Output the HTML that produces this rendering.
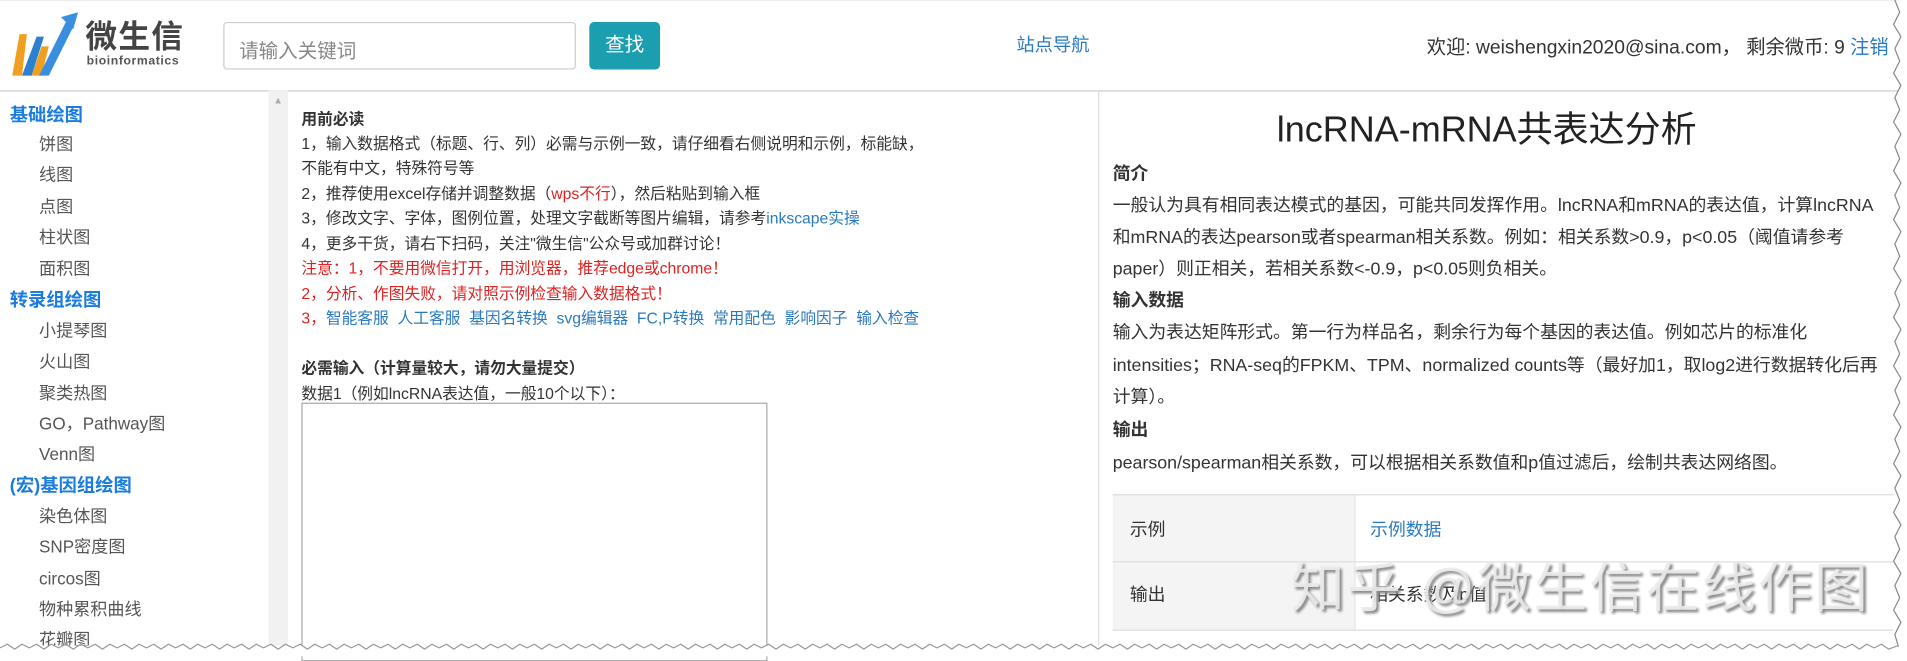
<!DOCTYPE html>
<html><head><meta charset="utf-8"><style>
html,body{margin:0;padding:0;background:#fff;overflow:hidden;width:1907px;height:656px}
#w{position:absolute;left:0;top:0;width:1563px;height:538px;transform:scale(1.2201);transform-origin:0 0;font-family:"Liberation Sans","Noto Sans CJK SC",sans-serif;color:#333}
.a{position:absolute;white-space:nowrap}
.blue{color:#2a7ac0}
.side div{position:absolute;left:32px;font-size:14px;color:#555}
.side b{position:absolute;left:8px;font-size:15px;color:#1a7be0}
.mid div{position:absolute;left:247px;font-size:12.9px;white-space:nowrap}
.r{position:absolute;left:912px;font-size:14.6px;white-space:nowrap}
</style></head><body><div id="w">
<!-- header -->
<div class="a" style="left:0;top:0;width:1556px;height:73px;border-bottom:1px solid #ccc;border-top:1px solid #eee"></div>
<svg class="a" style="left:6px;top:8px" width="60" height="58" viewBox="0 0 60 58">
<path d="M4 54 L10 20 L16 20 L12 54Z" fill="#f0a020"/>
<path d="M12 54 L24 22 L30 22 L20 54Z" fill="#2d7fd0"/>
<path d="M20 54 L28 30 L34 30 L28 54Z" fill="#f0a020"/>
<path d="M26 54 L48 10 L54 14 L34 54Z" fill="#3a8ee0"/>
<path d="M44 6 L58 2 L54 16Z" fill="#3a8ee0"/>
</svg>
<div class="a" style="left:70px;top:10px;font-size:26px;font-weight:bold;color:#444;letter-spacing:1px">微生信</div>
<div class="a" style="left:71px;top:45px;font-size:10px;font-weight:bold;color:#555;letter-spacing:.5px">bioinformatics</div>
<div class="a" style="left:183px;top:18px;width:287px;height:37px;border:1px solid #ccc;border-radius:3px"></div>
<div class="a" style="left:196px;top:28px;font-size:16px;color:#888">请输入关键词</div>
<div class="a" style="left:483px;top:18px;width:58px;height:39px;background:#1b9fb0;border-radius:4px;color:#fff;font-size:16px;line-height:39px;text-align:center">查找</div>
<div class="a blue" style="left:833px;top:26px;font-size:15px">站点导航</div>
<div class="a" style="right:15px;top:26px;font-size:15.8px;color:#333">欢迎: weishengxin2020@sina.com， 剩余微币: 9 <span class="blue">注销</span></div>
<!-- sidebar -->
<div class="side">
<b style="top:83px">基础绘图</b>
<div style="top:108px">饼图</div><div style="top:133px">线图</div><div style="top:159px">点图</div><div style="top:184px">柱状图</div><div style="top:210px">面积图</div>
<b style="top:235px">转录组绘图</b>
<div style="top:261px">小提琴图</div><div style="top:286px">火山图</div><div style="top:312px">聚类热图</div><div style="top:337px">GO，Pathway图</div><div style="top:362px">Venn图</div>
<b style="top:387px">(宏)基因组绘图</b>
<div style="top:413px">染色体图</div><div style="top:438px">SNP密度图</div><div style="top:464px">circos图</div><div style="top:489px">物种累积曲线</div><div style="top:514px">花瓣图</div>
</div>
<div class="a" style="left:220px;top:74px;width:16px;height:460px;background:#f1f1f1"></div>
<div class="a" style="left:224px;top:78px;font-size:8px;color:#aaa">▲</div>
<!-- middle -->
<div class="mid">
<div style="top:87px;font-weight:bold">用前必读</div>
<div style="top:107px">1，输入数据格式（标题、行、列）必需与示例一致，请仔细看右侧说明和示例，标能缺，</div>
<div style="top:127px">不能有中文，特殊符号等</div>
<div style="top:148px">2，推荐使用excel存储并调整数据（<span style="color:#d22">wps不行</span>），然后粘贴到输入框</div>
<div style="top:168px">3，修改文字、字体，图例位置，处理文字截断等图片编辑，请参考<span class="blue">inkscape实操</span></div>
<div style="top:189px">4，更多干货，请右下扫码，关注"微生信"公众号或加群讨论！</div>
<div style="top:209px;color:#d22">注意：1，不要用微信打开，用浏览器，推荐edge或chrome！</div>
<div style="top:230px;color:#d22">2，分析、作图失败，请对照示例检查输入数据格式！</div>
<div style="top:250px"><span style="color:#d22">3，</span><span class="blue">智能客服&nbsp; 人工客服&nbsp; 基因名转换&nbsp; svg编辑器&nbsp; FC,P转换&nbsp; 常用配色&nbsp; 影响因子&nbsp; 输入检查</span></div>
<div style="top:291px;font-weight:bold">必需输入（计算量较大，请勿大量提交）</div>
<div style="top:312px">数据1（例如lncRNA表达值，一般10个以下）：</div>
</div>
<div class="a" style="left:247px;top:330px;width:380px;height:210px;border:1px solid #aaa"></div>
<div class="a" style="left:900px;top:74px;width:1px;height:460px;background:#ddd"></div>
<!-- right -->
<div class="a" style="left:912px;top:83px;width:613px;text-align:center;font-size:29.5px;color:#222">lncRNA-mRNA共表达分析</div>
<div class="r" style="top:131px;font-weight:bold">简介</div>
<div class="r" style="top:157px">一般认为具有相同表达模式的基因，可能共同发挥作用。lncRNA和mRNA的表达值，计算lncRNA</div>
<div class="r" style="top:183px">和mRNA的表达pearson或者spearman相关系数。例如：相关系数&gt;0.9，p&lt;0.05（阈值请参考</div>
<div class="r" style="top:209px">paper）则正相关，若相关系数&lt;-0.9，p&lt;0.05则负相关。</div>
<div class="r" style="top:235px;font-weight:bold">输入数据</div>
<div class="r" style="top:261px">输入为表达矩阵形式。第一行为样品名，剩余行为每个基因的表达值。例如芯片的标准化</div>
<div class="r" style="top:288px">intensities；RNA-seq的FPKM、TPM、normalized counts等（最好加1，取log2进行数据转化后再</div>
<div class="r" style="top:314px">计算）。</div>
<div class="r" style="top:341px;font-weight:bold">输出</div>
<div class="r" style="top:368px">pearson/spearman相关系数，可以根据相关系数值和p值过滤后，绘制共表达网络图。</div>
<div class="a" style="left:912px;top:405px;width:198px;height:111px;background:#f4f4f4"></div>
<div class="a" style="left:912px;top:405px;width:640px;height:110px;border-top:1px solid #ddd;border-bottom:1px solid #ddd"></div>
<div class="a" style="left:912px;top:460px;width:640px;height:1px;background:#ddd"></div>
<div class="a" style="left:1110px;top:405px;width:1px;height:111px;background:#e4e4e4"></div>
<div class="r" style="left:926px;top:423px">示例</div>
<div class="r blue" style="left:1123px;top:423px">示例数据</div>
<div class="r" style="left:926px;top:476px">输出</div>
<div class="r" style="left:1123px;top:476px">相关系数及p值</div>
<div class="a" style="left:1058px;top:446px;font-size:44px;color:rgba(235,235,235,.9);text-shadow:2px 2px 2px #888;letter-spacing:2px">知乎 @微生信在线作图</div>
<!-- torn edges -->
<svg class="a" style="left:0;top:0" width="1563" height="538">
<rect x="0" y="529" width="1563" height="9" fill="#fff"/>
<rect x="1557" y="0" width="6" height="538" fill="#fff"/>
<polyline fill="none" stroke="#888" stroke-width="1" points="1553,0 1557,10 1552,20 1558,30 1553,40 1557,50 1552,60 1558,70 1553,80 1557,90 1552,100 1558,110 1553,120 1557,130 1552,140 1558,150 1553,160 1557,170 1552,180 1558,190 1553,200 1557,210 1552,220 1558,230 1553,240 1557,250 1552,260 1558,270 1553,280 1557,290 1552,300 1558,310 1553,320 1557,330 1552,340 1558,350 1553,360 1557,370 1552,380 1558,390 1553,400 1557,410 1552,420 1558,430 1553,440 1557,450 1552,460 1558,470 1553,480 1557,490 1552,500 1558,510 1553,520 1556,530"/>
<polyline fill="none" stroke="#999" stroke-width="1" points="0,531 6,528 12,532 18,528 24,531 30,528 36,532 42,528 48,531 54,528 60,532 66,528 72,531 78,528 84,532 90,528 96,531 102,528 108,532 114,528 120,531 126,528 132,532 138,528 144,531 150,528 156,532 162,528 168,531 174,528 180,532 186,528 192,531 198,528 204,532 210,528 216,531 222,528 228,532 234,528 240,531 246,528 252,532 258,528 264,531 270,528 276,532 282,528 288,531 294,528 300,532 306,528 312,531 318,528 324,532 330,528 336,531 342,528 348,532 354,528 360,531 366,528 372,532 378,528 384,531 390,528 396,532 402,528 408,531 414,528 420,532 426,528 432,531 438,528 444,532 450,528 456,531 462,528 468,532 474,528 480,531 486,528 492,532 498,528 504,531 510,528 516,532 522,528 528,531 534,528 540,532 546,528 552,531 558,528 564,532 570,528 576,531 582,528 588,532 594,528 600,531 606,528 612,532 618,528 624,531 630,528 636,532 642,528 648,531 654,528 660,532 666,528 672,531 678,528 684,532 690,528 696,531 702,528 708,532 714,528 720,531 726,528 732,532 738,528 744,531 750,528 756,532 762,528 768,531 774,528 780,532 786,528 792,531 798,528 804,532 810,528 816,531 822,528 828,532 834,528 840,531 846,528 852,532 858,528 864,531 870,528 876,532 882,528 888,531 894,528 900,532 906,528 912,531 918,528 924,532 930,528 936,531 942,528 948,532 954,528 960,531 966,528 972,532 978,528 984,531 990,528 996,532 1002,528 1008,531 1014,528 1020,532 1026,528 1032,531 1038,528 1044,532 1050,528 1056,531 1062,528 1068,532 1074,528 1080,531 1086,528 1092,532 1098,528 1104,531 1110,528 1116,532 1122,528 1128,531 1134,528 1140,532 1146,528 1152,531 1158,528 1164,532 1170,528 1176,531 1182,528 1188,532 1194,528 1200,531 1206,528 1212,532 1218,528 1224,531 1230,528 1236,532 1242,528 1248,531 1254,528 1260,532 1266,528 1272,531 1278,528 1284,532 1290,528 1296,531 1302,528 1308,532 1314,528 1320,531 1326,528 1332,532 1338,528 1344,531 1350,528 1356,532 1362,528 1368,531 1374,528 1380,532 1386,528 1392,531 1398,528 1404,532 1410,528 1416,531 1422,528 1428,532 1434,528 1440,531 1446,528 1452,532 1458,528 1464,531 1470,528 1476,532 1482,528 1488,531 1494,528 1500,532 1506,528 1512,531 1518,528 1524,532 1530,528 1536,531 1542,528 1548,532 1556,529"/>
</svg>
</div></body></html>
